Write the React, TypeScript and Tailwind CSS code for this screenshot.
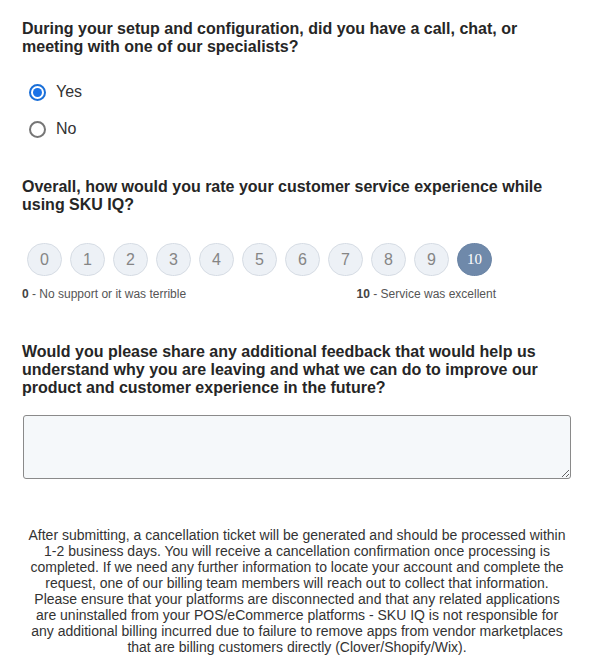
import { useState } from "react"

const heading = "text-[16px] leading-[18px] font-bold text-[#262626]"

function Radio({ label, checked, onClick }: { label: string; checked: boolean; onClick: () => void }) {
  return (
    <button type="button" onClick={onClick} className="flex items-center h-[20px] text-left">
      {checked ? (
        <span className="w-[17px] h-[17px] rounded-full border-2 border-[#1a6fd8] flex items-center justify-center ml-[29px]">
          <span className="w-[9px] h-[9px] rounded-full bg-[#1a73e8]" />
        </span>
      ) : (
        <span className="w-[17px] h-[17px] rounded-full border-2 border-[#767676] ml-[29px]" />
      )}
      <span className="ml-[10px] text-[16px] text-[#333]">{label}</span>
    </button>
  )
}

export default function App() {
  const [met, setMet] = useState("yes")
  const [score, setScore] = useState(10)

  return (
    <div className="w-[612px] h-[661px] bg-white overflow-hidden" style={{ fontFamily: '"Liberation Sans", Arial, sans-serif' }}>
      <div className="w-[550px] ml-[22px] pt-[20px]">
        <h2 className={heading}>
          During your setup and configuration, did you have a call, chat, or meeting with one of our specialists?
        </h2>

        <div className="flex flex-col gap-[17px] mt-[26px] -ml-[22px]">
          <Radio label="Yes" checked={met === "yes"} onClick={() => setMet("yes")} />
          <Radio label="No" checked={met === "no"} onClick={() => setMet("no")} />
        </div>

        <h2 className={`${heading} mt-[39px]`}>
          Overall, how would you rate your customer service experience while using SKU IQ?
        </h2>

        <div className="flex gap-[8px] mt-[29px] pl-[5px]">
          {Array.from({ length: 11 }, (_, i) => (
            <button
              key={i}
              type="button"
              onClick={() => setScore(i)}
              className={
                i === score
                  ? "w-[35px] h-[33px] rounded-full bg-[#6f89aa] border border-[#6a84a5] text-white text-[15px] flex items-center justify-center"
                  : "w-[35px] h-[33px] rounded-full bg-[#edf1f6] border border-[#d6dce4] text-[#858585] text-[16px] flex items-center justify-center"
              }
              style={i === score ? { fontFamily: '"Liberation Serif", "Times New Roman", serif' } : undefined}
            >
              {i}
            </button>
          ))}
        </div>

        <div className="flex justify-between w-[474px] mt-[11px] text-[12px] leading-[14px] text-[#555]">
          <span>
            <b className="text-[#444]">0</b> - No support or it was terrible
          </span>
          <span>
            <b className="text-[#444]">10</b> - Service was excellent
          </span>
        </div>

        <h2 className={`${heading} mt-[42px]`}>
          Would you please share any additional feedback that would help us understand why you are leaving and what we can do to improve our product and customer experience in the future?
        </h2>

        <textarea className="block w-[548px] h-[64px] ml-[1px] mt-[18px] bg-[#f5f8fa] border border-[#8a8a8a] rounded-[3px] outline-none p-2 text-[14px]" />

        <p className="w-[542px] ml-[4px] mt-[48px] text-[14px] leading-[16px] text-[#333] text-center">
          After submitting, a cancellation ticket will be generated and should be processed within 1-2 business days. You will receive a cancellation confirmation once processing is completed. If we need any further information to locate your account and complete the request, one of our billing team members will reach out to collect that information. Please ensure that your platforms are disconnected and that any related applications are uninstalled from your POS/eCommerce platforms - SKU IQ is not responsible for any additional billing incurred due to failure to remove apps from vendor marketplaces that are billing customers directly (Clover/Shopify/Wix).
        </p>
      </div>
    </div>
  )
}
